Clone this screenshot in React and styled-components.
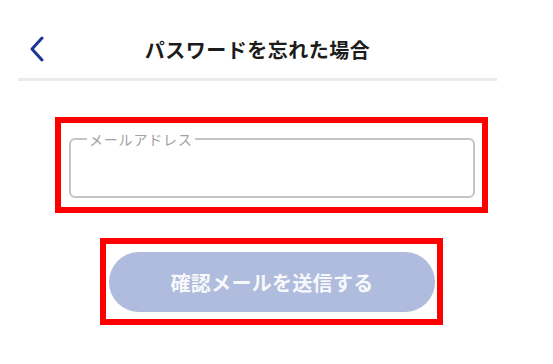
import React from 'react';
import styled, { createGlobalStyle } from 'styled-components';

const GlobalStyle = createGlobalStyle`
  body {
    margin: 0;
    background: #ffffff;
    font-family: "Noto Sans CJK JP", "Noto Sans", sans-serif;
  }
`;

const Page = styled.div`
  width: 553px;
  height: 364px;
  display: flex;
  flex-direction: column;
`;

const Header = styled.header`
  margin: 0 56px 0 18px;
  height: 58px;
  padding-top: 20px;
  display: grid;
  grid-template-columns: 1fr auto 1fr;
  align-items: center;
  border-bottom: 3px solid #ebebeb;
`;

const BackButton = styled.button`
  justify-self: start;
  margin-left: 11px;
  padding: 0;
  border: none;
  background: transparent;
  display: flex;
  cursor: pointer;
`;

const Title = styled.h1`
  margin: 0;
  font-size: 20px;
  font-weight: 700;
  color: #1c1c1c;
  letter-spacing: 0.5px;
`;

const Main = styled.main`
  width: 433px;
  margin: 36px 0 0 55px;
  display: flex;
  flex-direction: column;
  align-items: center;
  gap: 25px;
`;

const Highlight = styled.div`
  box-sizing: border-box;
  width: ${(p) => p.$w}px;
  height: ${(p) => p.$h}px;
  border: 6px solid #ff0000;
  padding: ${(p) => p.$pad};
  display: flex;
`;

const Field = styled.fieldset`
  box-sizing: border-box;
  width: 100%;
  height: 66px;
  margin: 0;
  padding: 0 16px;
  border: 2px solid #c4c4c4;
  border-radius: 6px;
`;

const Legend = styled.legend`
  padding: 0 2px;
  font-size: 14px;
  line-height: 14px;
  color: #a2a2a2;
  letter-spacing: 0.8px;
`;

const Input = styled.input`
  width: 100%;
  border: none;
  outline: none;
  font-size: 16px;
  background: transparent;
`;

const SendButton = styled.button`
  width: 326px;
  height: 60px;
  border: none;
  border-radius: 30px;
  background: #b0bcdd;
  color: #f7f8fc;
  font-family: inherit;
  font-size: 20px;
  font-weight: 700;
  letter-spacing: 0.3px;
  cursor: default;
`;

export default function App() {
  return (
    <>
      <GlobalStyle />
      <Page>
        <Header>
          <BackButton aria-label="戻る">
            <svg width="16" height="26" viewBox="0 0 16 26">
              <polyline
                points="13,2 3,13 13,24"
                fill="none"
                stroke="#1a3797"
                strokeWidth="3"
                strokeLinecap="round"
                strokeLinejoin="round"
              />
            </svg>
          </BackButton>
          <Title>パスワードを忘れた場合</Title>
          <span />
        </Header>
        <Main>
          <Highlight $w={433} $h={96} $pad="9px 7px 9px 8px">
            <Field>
              <Legend>メールアドレス</Legend>
              <Input type="email" />
            </Field>
          </Highlight>
          <Highlight $w={343} $h={87} $pad="8px 2px 7px 3px">
            <SendButton disabled>確認メールを送信する</SendButton>
          </Highlight>
        </Main>
      </Page>
    </>
  );
}
